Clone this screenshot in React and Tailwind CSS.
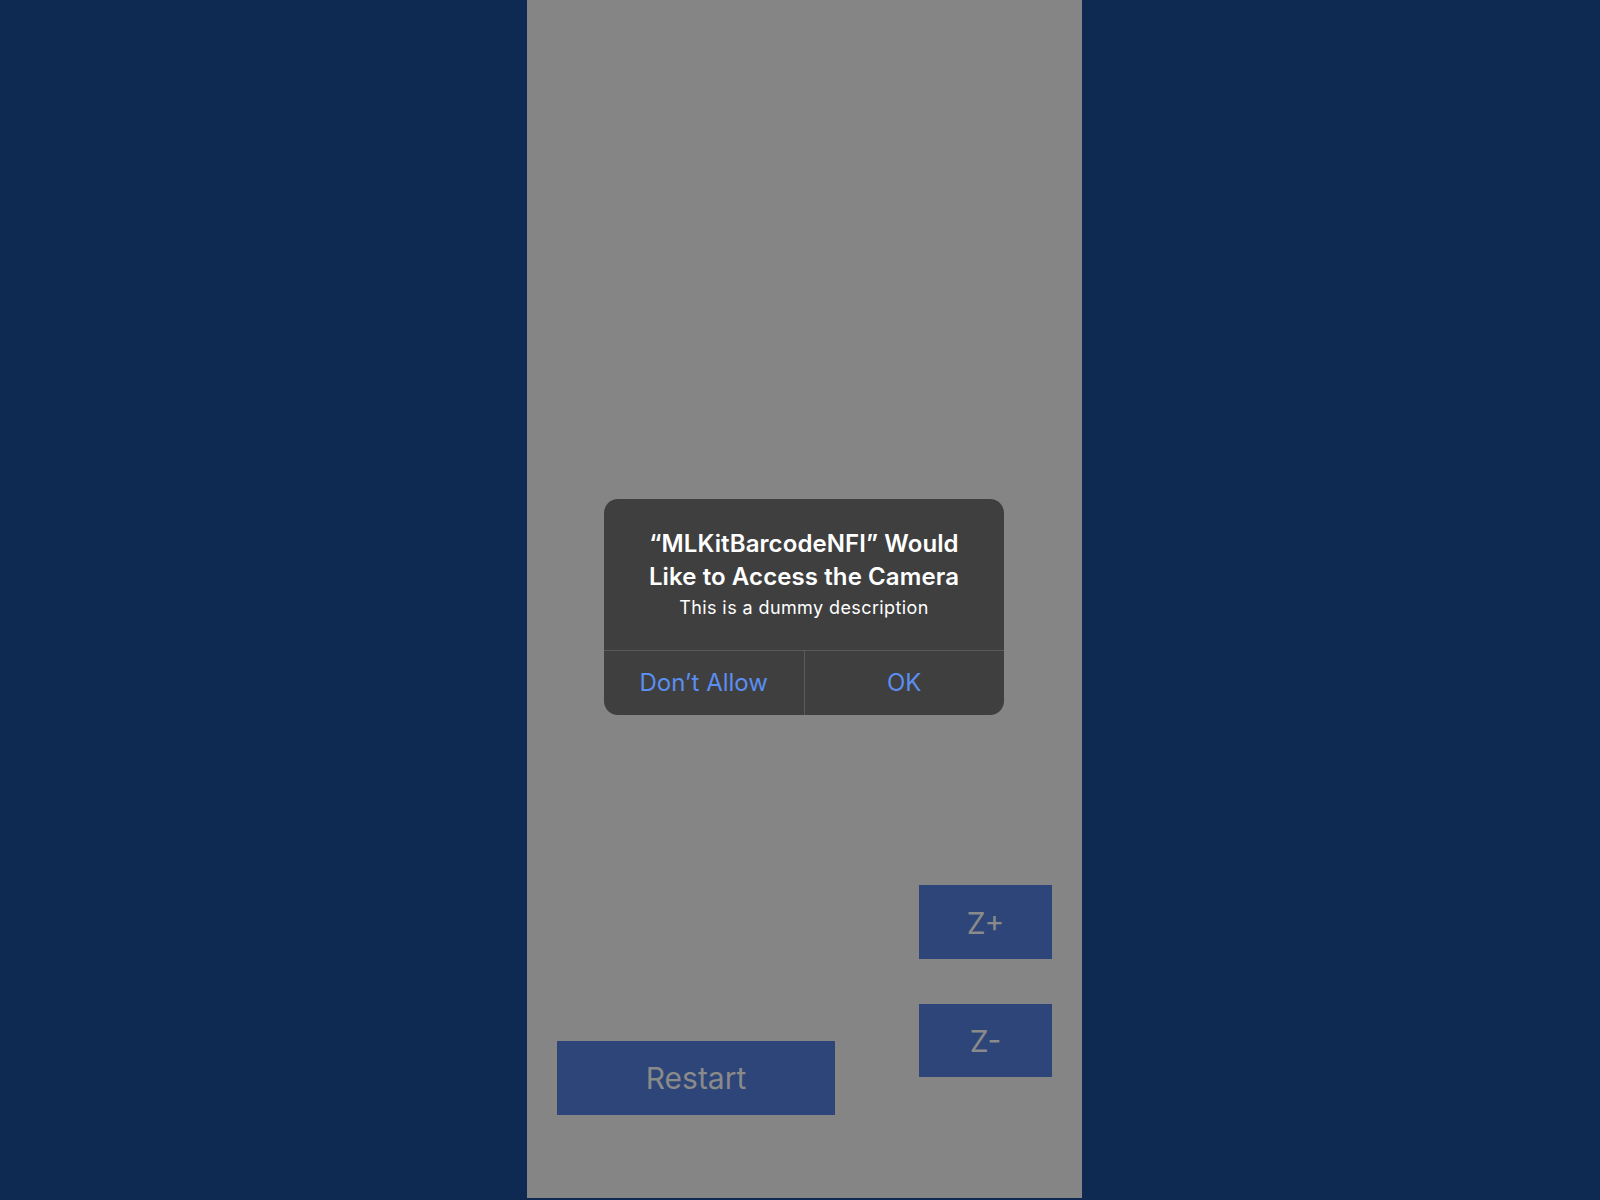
import React from 'react';

const font = { fontFamily: 'Inter, "Noto Sans", sans-serif' };

const App = () => {
  return (
    <div className="w-[1600px] h-[1200px] bg-[#0e2a52] overflow-hidden" style={font}>
      <div className="relative ml-[527px] w-[555px] h-[1198px] bg-[#858585]">
        {/* app content */}
        <div className="flex justify-between pl-[30px] pr-[30px] pt-[885px]">
          <div className="mt-[156px]">
            <div className="w-[278px] h-[74px] bg-[#2d4578] flex items-center justify-center text-[30px] text-[#8a8a8a]">
              Restart
            </div>
          </div>
          <div className="flex flex-col gap-[45px]">
            <div className="w-[133px] h-[74px] bg-[#2d4578] flex items-center justify-center pt-[2px] text-[30px] text-[#8a8a8a]">
              Z+
            </div>
            <div className="w-[133px] h-[73px] bg-[#2d4578] flex items-center justify-center pt-[2px] text-[30px] text-[#8a8a8a]">
              Z-
            </div>
          </div>
        </div>

        {/* permission alert */}
        <div className="absolute left-[77px] top-[499px] w-[400px] rounded-[14px] bg-[#3f3f3f] overflow-hidden">
          <div className="pt-[28px] pb-[29px] px-4 text-center">
            <div className="text-[24px] leading-[33px] font-semibold text-white tracking-[0.1px]">
              “MLKitBarcodeNFI” Would<br />Like to Access the Camera
            </div>
            <div className="text-[18px] leading-[26px] text-white mt-[2px] tracking-[0.4px]">
              This is a dummy description
            </div>
          </div>
          <div className="flex h-[65px] border-t border-[#5a5a5a]">
            <div className="flex-1 flex items-center justify-center text-[24px] text-[#5b8ef0] border-r border-[#5a5a5a]">
              Don’t Allow
            </div>
            <div className="flex-1 flex items-center justify-center text-[24px] text-[#5b8ef0]">
              OK
            </div>
          </div>
        </div>
      </div>
    </div>
  );
};

export default App;
